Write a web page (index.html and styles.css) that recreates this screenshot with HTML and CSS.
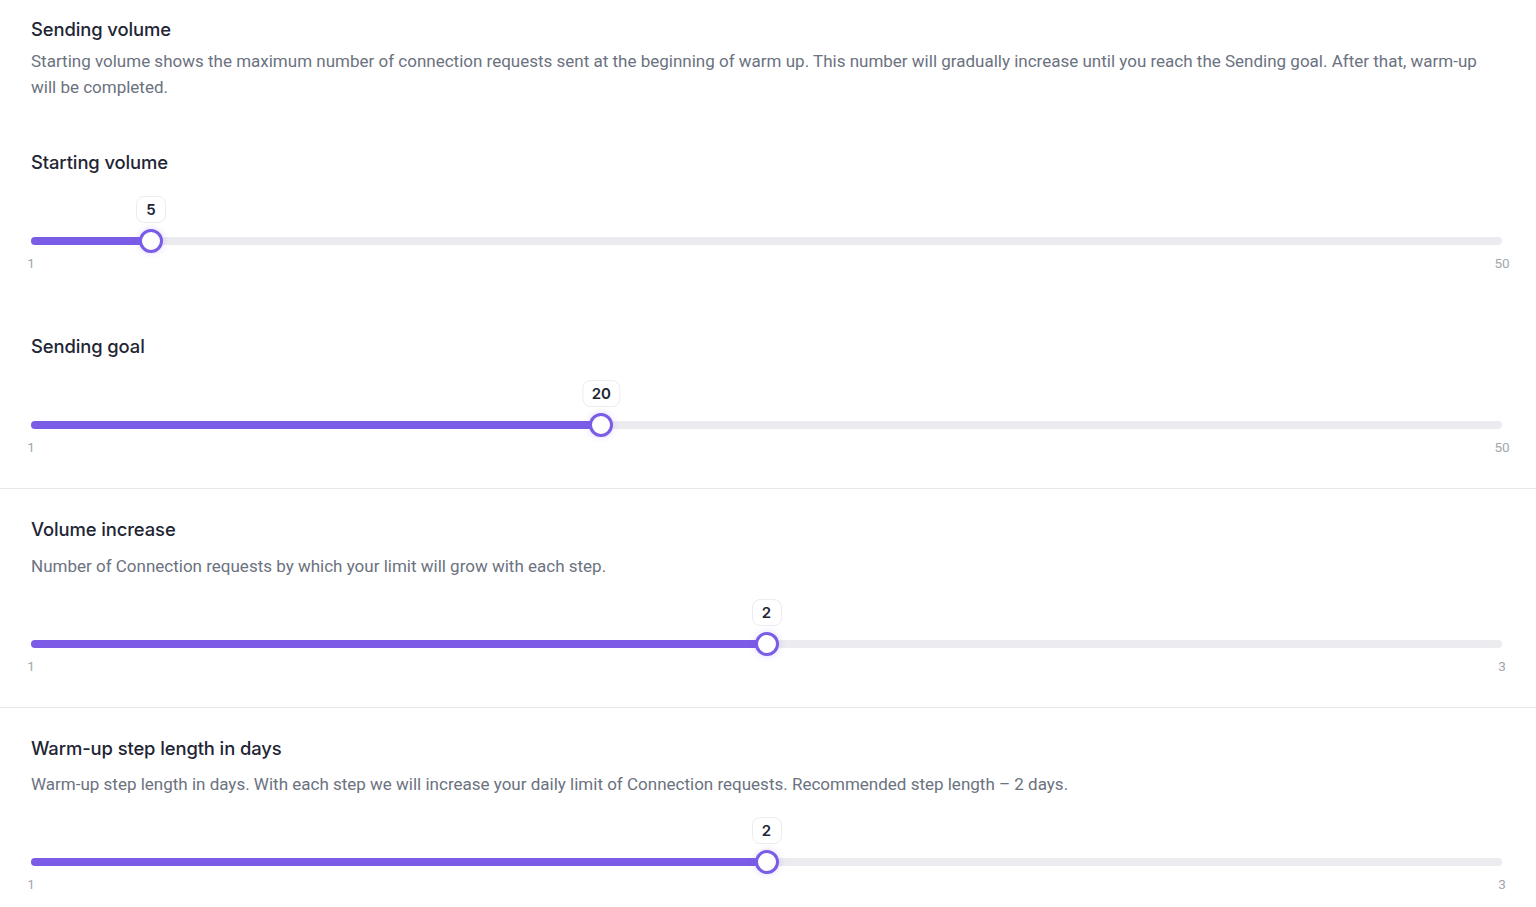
FILE: index.html
```html
<!DOCTYPE html>
<html lang="en">
<head>
<meta charset="utf-8">
<title>Warm-up settings</title>
<link rel="stylesheet" href="styles.css">
</head>
<body>
<main class="page">
  <section class="section section-first">
    <h2 class="title">Sending volume</h2>
    <p class="desc">Starting volume shows the maximum number of connection requests sent at the beginning of warm up. This number will gradually increase until you reach the Sending goal. After that, warm-up will be completed.</p>

    <h3 class="title subtitle">Starting volume</h3>
    <div class="slider">
      <div class="track"><div class="fill" style="width: 8.163%"></div>
        <div class="thumb" style="left: 8.163%"><span class="badge">5</span></div>
      </div>
      <div class="scale"><span>1</span><span>50</span></div>
    </div>

    <h3 class="title subtitle subtitle-gap">Sending goal</h3>
    <div class="slider">
      <div class="track"><div class="fill" style="width: 38.776%"></div>
        <div class="thumb" style="left: 38.776%"><span class="badge">20</span></div>
      </div>
      <div class="scale"><span>1</span><span>50</span></div>
    </div>
  </section>

  <section class="section">
    <h2 class="title">Volume increase</h2>
    <p class="desc desc-single">Number of Connection requests by which your limit will grow with each step.</p>
    <div class="slider">
      <div class="track"><div class="fill" style="width: 50%"></div>
        <div class="thumb" style="left: 50%"><span class="badge">2</span></div>
      </div>
      <div class="scale"><span>1</span><span>3</span></div>
    </div>
  </section>

  <section class="section section-last">
    <h2 class="title">Warm-up step length in days</h2>
    <p class="desc desc-single">Warm-up step length in days. With each step we will increase your daily limit of Connection requests. Recommended step length – 2 days.</p>
    <div class="slider">
      <div class="track"><div class="fill" style="width: 50%"></div>
        <div class="thumb" style="left: 50%"><span class="badge">2</span></div>
      </div>
      <div class="scale"><span>1</span><span>3</span></div>
    </div>
  </section>
</main>
</body>
</html>
```

FILE: styles.css
```css
* { box-sizing: border-box; }

html, body {
  margin: 0;
  padding: 0;
  background: #ffffff;
}

body {
  font-family: Roboto, "Liberation Sans", sans-serif;
  color: #1f2633;
}

.page {
  display: flex;
  flex-direction: column;
}

.section {
  padding: 28px 34px 33px 31px;
  border-bottom: 1px solid #e8e8ec;
}

.section-first {
  padding-top: 17px;
}

.section-last {
  border-bottom: none;
}

.title {
  margin: 0;
  font-family: Inter, "Noto Sans", sans-serif;
  font-size: 18.4px;
  line-height: 24px;
  font-weight: 500;
  color: #1e2534;
  letter-spacing: -0.1px;
}

.subtitle {
  margin-top: 50px;
}

.subtitle-gap {
  margin-top: 63px;
}

.desc {
  margin: 7px 0 0;
  font-size: 17px;
  line-height: 26px;
  color: #6b7280;
}

.desc-single {
  margin-top: 12px;
}

.section-last .desc-single {
  margin-top: 11px;
}

.slider {
  margin-top: 23px;
  padding-top: 40px;
}

.section .desc-single + .slider {
  margin-top: 21px;
}

.track {
  position: relative;
  height: 8px;
  border-radius: 4px;
  background: #ebebf0;
}

.fill {
  height: 100%;
  border-radius: 4px;
  background: #7b5ce6;
}

.thumb {
  position: absolute;
  top: 50%;
  width: 24px;
  height: 24px;
  margin: -12px 0 0 -12px;
  border-radius: 50%;
  background: #ffffff;
  border: 3px solid #7b5ce6;
  box-shadow: 0 0 6px rgba(123, 92, 230, 0.25);
}

.badge {
  position: absolute;
  left: 50%;
  bottom: 27px;
  transform: translateX(-50%);
  min-width: 30px;
  height: 27px;
  padding: 0 8px;
  display: flex;
  align-items: center;
  justify-content: center;
  background: #ffffff;
  border: 1px solid #ececf0;
  border-radius: 8px;
  font-family: Inter, "Noto Sans", sans-serif;
  font-size: 15px;
  font-weight: 600;
  color: #1e2534;
}

.scale {
  display: flex;
  justify-content: space-between;
  margin-top: 10px;
  font-size: 13.5px;
  line-height: 16px;
  color: #a3a6ad;
}

.scale span {
  display: block;
  width: 20px;
  text-align: center;
  margin: 0 -10px;
}
```
